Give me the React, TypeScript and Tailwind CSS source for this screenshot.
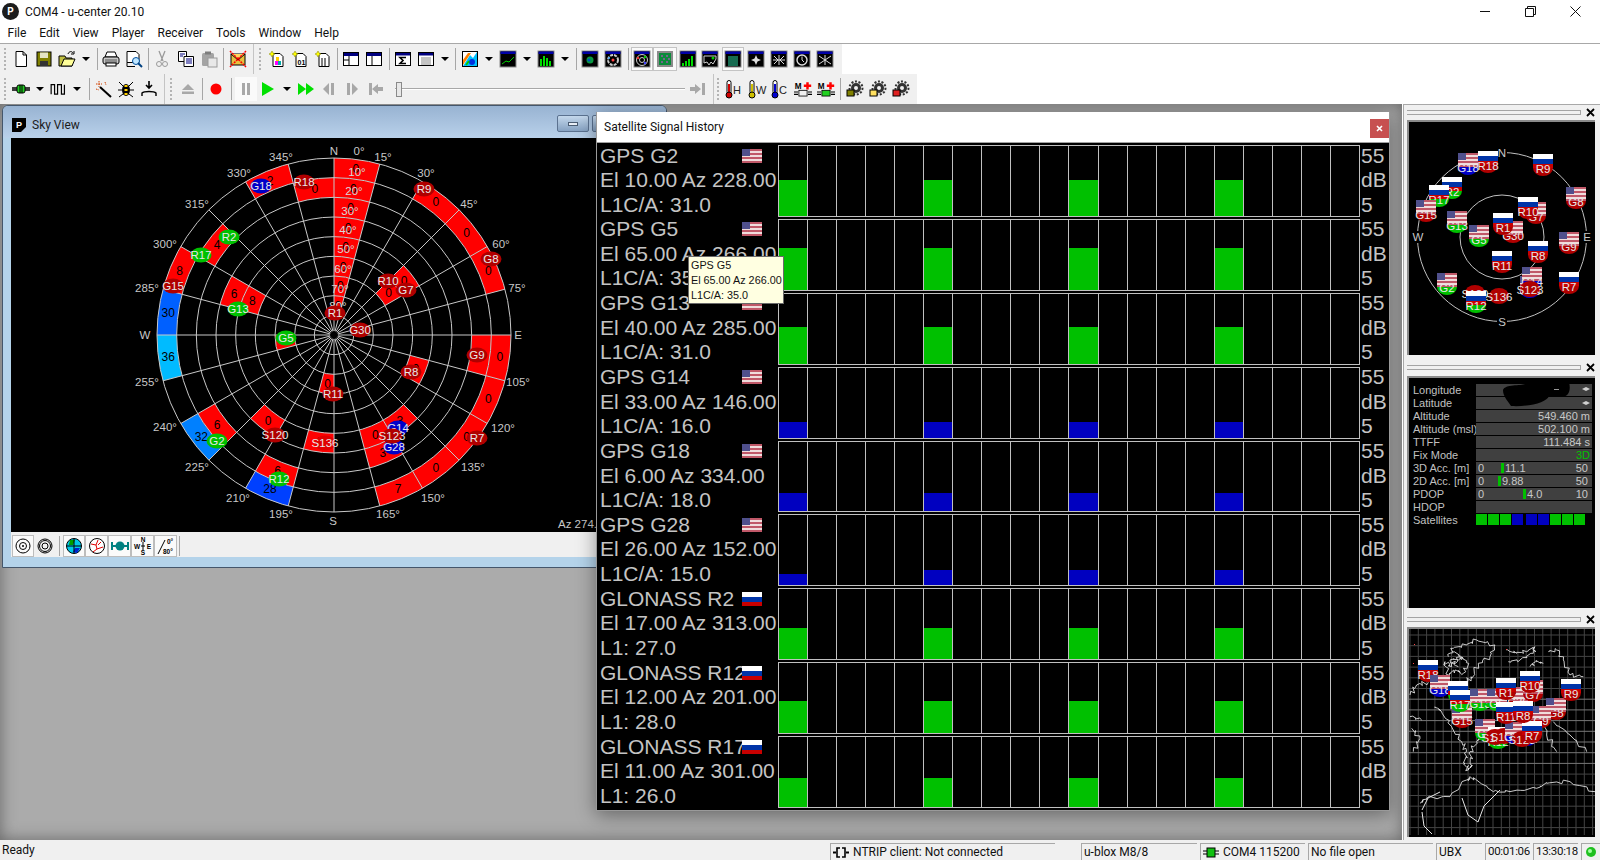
import type { ReactNode } from 'react';

const UI = 'font-["Roboto",sans-serif]';
const ARIAL = '"Liberation Sans", sans-serif';

// ---------- toolbar bits ----------
function I({ children }: { children: ReactNode }) {
  return <svg width="18" height="18" viewBox="0 0 18 18" className="block">{children}</svg>;
}

function Win({ children }: { children?: ReactNode }) {
  return (
    <I>
      <rect x="1" y="1" width="16" height="16" fill="#000" stroke="#8a8a8a" />
      <rect x="1.5" y="1.5" width="15" height="2.5" fill="#0000a8" />
      {children}
    </I>
  );
}

function Btn({ w, pressed, children }: { w: string; pressed?: boolean; children: ReactNode }) {
  return (
    <div className={`${w} h-[24px] flex items-center justify-center shrink-0 ${pressed ? 'bg-[#fafafa] border border-[#c4c4c4]' : ''}`}>
      {children}
    </div>
  );
}

function Dd({ w }: { w: string }) {
  return (
    <div className={`${w} h-[24px] flex items-center justify-center shrink-0`}>
      <svg width="8" height="4" viewBox="0 0 8 4"><path d="M0 0h8L4 4z" fill="#000" /></svg>
    </div>
  );
}

function Sep({ w }: { w: string }) {
  return (
    <div className={`${w} h-[24px] flex items-center justify-center shrink-0`}>
      <div className="w-px h-[22px] bg-[#a6a6a6]" />
    </div>
  );
}

function Grip({ w }: { w: string }) {
  return (
    <div className={`${w} h-[24px] flex flex-col items-center justify-center gap-[2px] shrink-0`}>
      {[0, 1, 2, 3, 4, 5].map(i => <div key={i} className="w-[2px] h-[2px] bg-[#b4b4b4]" />)}
    </div>
  );
}

const Star = () => <path d="M4 1l1 2 2 1-2 1-1 2-1-2-2-1 2-1z" fill="#ffff00" stroke="#808000" strokeWidth=".5" />;
const Page = () => <path d="M5 3.5h7l3 3v10H5z" fill="#fff" stroke="#000" />;

const Gear = ({ c }: { c: string }) => (
  <g>
    <circle cx="10" cy="8" r="5" fill="#333" />
    <circle cx="10" cy="8" r="6.5" fill="none" stroke="#333" strokeWidth="2" strokeDasharray="2 1.6" />
    <circle cx="10" cy="8" r="2" fill="#f0f0f0" />
    <rect x="1" y="10" width="7" height="6" fill={c} stroke="#000" />
  </g>
);

const Thermo = ({ c, t }: { c: string; t: string }) => (
  <svg width="22" height="20" viewBox="0 0 22 20" className="block">
    <rect x="5" y="1.5" width="4" height="13" rx="2" fill="#fff" stroke="#000" />
    <rect x="6" y="5" width="2" height="10" fill={c} />
    <circle cx="7" cy="16" r="3" fill={c} stroke="#000" />
    <text x="11" y="15" fontSize="11" fontFamily={ARIAL} fill="#222">{t}</text>
  </svg>
);

const MPlus = ({ c }: { c: string }) => (
  <svg width="18" height="17" viewBox="0 0 22 20" className="block">
    <text x="1" y="9" fontSize="10" fontWeight="700" fontFamily={ARIAL} fill="#000">M</text>
    <path d="M15 1h3v3h3v3h-3v3h-3V7h-3V4h3z" fill="#f00" />
    <path d="M0 13h5M0 16h5M17 13h5M17 16h5" stroke="#000" strokeWidth="1.4" />
    <rect x="6" y="11" width="10" height="7" fill={c} stroke="#000" />
  </svg>
);

function Toolbar1() {
  return (
    <div className="flex items-center h-[30px] w-[842px] bg-[#f0f0f0]">
      <Grip w="w-[10px]" />
      <Btn w="w-[22px]"><I><path d="M4 1.5h7l3.5 3.5v11.5H4z" fill="#fff" stroke="#000" /><path d="M11 1.5V5h3.5" fill="none" stroke="#000" /></I></Btn>
      <Btn w="w-[24px]"><I><rect x="2" y="2" width="14" height="14" fill="#808000" stroke="#000" /><rect x="5" y="2.5" width="8" height="5.5" fill="#e4e4c4" /><rect x="5" y="11" width="8" height="5" fill="#333" /></I></Btn>
      <Btn w="w-[22px]"><I><path d="M1 6h6l1 2h6v8H1z" fill="#c0c040" stroke="#000" /><path d="M3 16l3-7h11l-3 7z" fill="#ffff99" stroke="#000" /><path d="M10 4c1-3 4-3 5-1M16 1v3h-3" fill="none" stroke="#000" /></I></Btn>
      <Dd w="w-[16px]" />
      <Sep w="w-[6px]" />
      <Btn w="w-[22px]"><I><path d="M5 2h8l2 5H3z" fill="#fff" stroke="#000" /><rect x="1" y="7" width="16" height="7" rx="2" fill="#c8c8c8" stroke="#000" /><path d="M3 10h12M3 12h12" stroke="#555" /><rect x="4" y="13" width="10" height="3" fill="#fff" stroke="#000" /></I></Btn>
      <Btn w="w-[24px]"><I><path d="M2 1.5h9l3 3v8H2z" fill="#fff" stroke="#000" /><path d="M2 12.5v4h8" fill="none" stroke="#000" /><circle cx="11" cy="11" r="3.5" fill="#bfe6ff" stroke="#0050a0" /><path d="M13 13l4 4" stroke="#004080" strokeWidth="2" /></I></Btn>
      <Sep w="w-[4px]" />
      <Btn w="w-[24px]"><I><path d="M6 1l4 10M12 1L8 11" stroke="#9a9a9a" strokeWidth="1.3" /><circle cx="6" cy="14" r="2.5" fill="none" stroke="#9a9a9a" /><circle cx="12" cy="14" r="2.5" fill="none" stroke="#9a9a9a" /></I></Btn>
      <Btn w="w-[24px]"><I><path d="M1.5 1.5h8v10h-8z" fill="#fff" stroke="#000" /><path d="M7 6.5h9.5v10H7z" fill="#fff" stroke="#000" /><path d="M3 4h5M3 6h3M9 9h6M9 11h6M9 13h6" stroke="#000080" /></I></Btn>
      <Btn w="w-[22px]"><I><rect x="2" y="3" width="12" height="13" rx="1.5" fill="#a4a4a4" /><rect x="5" y="1.5" width="6" height="3" fill="#7d7d7d" /><rect x="8" y="8" width="9" height="9" fill="#e8e8e8" stroke="#9a9a9a" /></I></Btn>
      <Sep w="w-[7px]" />
      <Btn w="w-[22px]"><I><rect x="2" y="4" width="14" height="11" fill="#e8c040" stroke="#000" /><path d="M2 4l7 6 7-6" fill="#ffd860" stroke="#000" /><path d="M1 1l16 16M17 1L1 17" stroke="#f00" strokeWidth="1.5" strokeDasharray="2 1" /></I></Btn>
      <div className="w-[4px]" />
      <div className="w-px h-[30px] bg-[#c4c4c4]" />
      <Grip w="w-[12px]" />
      <Btn w="w-[22px]"><I><Page /><Star /><rect x="7" y="11" width="3" height="4" fill="#f0f" /><rect x="10" y="11" width="3" height="4" fill="#0aa" /><rect x="8" y="7" width="3" height="4" fill="#fc0" /></I></Btn>
      <Btn w="w-[24px]"><I><Page /><Star /><text x="6.5" y="15" fontSize="7" fontWeight="700" fontFamily={ARIAL} fill="#000">01</text></I></Btn>
      <Btn w="w-[22px]"><I><Page /><Star /><path d="M7 9h6M7 11h6M7 13h6M7 15h6" stroke="#000" strokeDasharray="2 1" /></I></Btn>
      <Sep w="w-[6px]" />
      <Btn w="w-[22px]"><I><rect x="1.5" y="2.5" width="15" height="13" fill="#fff" stroke="#000" /><rect x="2" y="3" width="14" height="3" fill="#000080" /><path d="M7 6v9M2 10h5" stroke="#000" /></I></Btn>
      <Btn w="w-[24px]"><I><rect x="1.5" y="2.5" width="15" height="13" fill="#fff" stroke="#000" /><rect x="2" y="3" width="14" height="3" fill="#000080" /><path d="M7 6v9" stroke="#000" /></I></Btn>
      <Sep w="w-[6px]" />
      <Btn w="w-[22px]"><I><rect x="1.5" y="2.5" width="15" height="13" fill="#fff" stroke="#000" /><rect x="2" y="3" width="14" height="2.5" fill="#000080" /><path d="M12 7.5H6l3 3-3 3h6" fill="none" stroke="#000" strokeWidth="1.6" /></I></Btn>
      <Btn w="w-[24px]"><I><rect x="1.5" y="2.5" width="15" height="13" fill="#fff" stroke="#000" /><rect x="2" y="3" width="14" height="2.5" fill="#000080" /><path d="M4 8h10M4 10h10M4 12h10M4 14h10" stroke="#888" /></I></Btn>
      <Dd w="w-[14px]" />
      <Sep w="w-[7px]" />
      <Btn w="w-[22px]"><I><rect x="1.5" y="1.5" width="15" height="15" fill="#fff" stroke="#000" /><path d="M2 16L9 5l3 3 4-6v14z" fill="#00c0ff" /><path d="M2 10l5-7h3L2 15z" fill="#ff8000" /><circle cx="11" cy="12" r="3" fill="#0030e0" /><path d="M5 15l3-4" stroke="#0c0" strokeWidth="2" /></I></Btn>
      <Dd w="w-[16px]" />
      <Btn w="w-[22px]"><Win><path d="M3 14l4-3 3 1 5-5" fill="none" stroke="#0c0" /></Win></Btn>
      <Dd w="w-[16px]" />
      <Btn w="w-[22px]"><Win><path d="M4 16V9M7 16V6M10 16V8M13 16v-5" stroke="#0d0" strokeWidth="2" /></Win></Btn>
      <Dd w="w-[16px]" />
      <Sep w="w-[6px]" />
      <Btn w="w-[22px]"><Win><circle cx="9" cy="10" r="3.5" fill="#0a9a40" /><circle cx="8" cy="10" r="1.5" fill="#0050c0" /></Win></Btn>
      <Btn w="w-[24px]"><Win><circle cx="9" cy="10" r="5" fill="none" stroke="#ccc" strokeWidth="2" strokeDasharray="3 1" /><circle cx="9" cy="10" r="1.5" fill="#f44" /><circle cx="5" cy="8" r="1" fill="#4af" /></Win></Btn>
      <Sep w="w-[6px]" />
      <Btn w="w-[22px]" pressed><Win><circle cx="9" cy="10" r="5.5" fill="none" stroke="#ccc" /><circle cx="9" cy="10" r="2.5" fill="none" stroke="#ccc" /><circle cx="5" cy="8" r="1.2" fill="#e33" /><circle cx="12" cy="7" r="1.2" fill="#0c0" /><circle cx="12" cy="13" r="1.2" fill="#44f" /></Win></Btn>
      <Btn w="w-[24px]" pressed><I><rect x="1" y="1" width="16" height="16" fill="#8a8a8a" /><rect x="3" y="3" width="12" height="12" fill="#0a8a3a" /><path d="M5 6h2M10 6h2M7 9h2M12 9h2M5 12h2M10 12h2" stroke="#e040e0" /></I></Btn>
      <Btn w="w-[21px]"><Win><path d="M4 16v-3M7 16v-5M10 16V9M13 16V6" stroke="#0d0" strokeWidth="2" /></Win></Btn>
      <Btn w="w-[24px]"><Win><path d="M3 6h12v3l-3 5-2-2-2 3-2-3-3 1z" fill="none" stroke="#ccc" /><circle cx="12" cy="8" r="1.5" fill="#0c0" /></Win></Btn>
      <Btn w="w-[22px]" pressed><Win><path d="M4 7h10M4 9h10M4 11h10M4 13h10M4 15h10" stroke="#2dd4a0" /></Win></Btn>
      <Btn w="w-[24px]"><Win><path d="M9 5l1.5 3.5L14 10l-3.5 1.5L9 15l-1.5-3.5L4 10l3.5-1.5z" fill="#ddd" /></Win></Btn>
      <Btn w="w-[22px]"><Win><path d="M4 6l4 4-4 4M14 6l-4 4 4 4M9 5v10M3 10h12" stroke="#ddd" fill="none" /></Win></Btn>
      <Btn w="w-[24px]"><Win><circle cx="9" cy="10" r="5" fill="none" stroke="#ddd" strokeWidth="1.4" /><path d="M9 6.5V10l2 2" stroke="#ddd" fill="none" /></Win></Btn>
      <Btn w="w-[22px]"><Win><path d="M3 14L15 6M3 6l12 8M9 5v10" stroke="#ddd" /></Win></Btn>
    </div>
  );
}

function Toolbar2() {
  return (
    <div className="flex items-center h-[30px] w-[917px] bg-[#f0f0f0]">
      <Grip w="w-[10px]" />
      <Btn w="w-[22px]"><I><path d="M0 8h18M0 10h18" stroke="#000" strokeWidth="1.3" /><rect x="5" y="5" width="8" height="8" rx="2" fill="#20d020" stroke="#000" /><path d="M8 5v8M10 5v8" stroke="#000" /></I></Btn>
      <Dd w="w-[16px]" />
      <Btn w="w-[20px]"><svg width="16" height="12" viewBox="0 0 18 14" className="block"><path d="M1 13V2h4v11h3.5V2H13v11h3.5V2" fill="none" stroke="#000" strokeWidth="1.4" /></svg></Btn>
      <Dd w="w-[18px]" />
      <Sep w="w-[6px]" />
      <Btn w="w-[22px]"><I><path d="M6 7l11 10" stroke="#000" strokeWidth="2" /><path d="M5 1v6M2 4h6M11 2l1 3M2 9l3 1" stroke="#d04000" strokeDasharray="1.5 1" /></I></Btn>
      <Btn w="w-[24px]"><I><ellipse cx="9" cy="10" rx="4" ry="6" fill="#000" /><path d="M9 5v11" stroke="#ffd000" strokeWidth="3" strokeDasharray="2 2" /><path d="M2 2l4 4M16 2l-4 4M1 10h4M13 10h4M2 17l4-3M16 17l-4-3" stroke="#000" /></I></Btn>
      <Btn w="w-[22px]"><I><path d="M9 1v7M6 5l3 3 3-3" fill="none" stroke="#000" strokeWidth="1.6" /><path d="M2 16v-3c2-2 12-2 14 0v3" fill="none" stroke="#000" strokeWidth="1.4" /></I></Btn>
      <div className="w-[4px]" />
      <div className="w-px h-[30px] bg-[#c4c4c4]" />
      <Grip w="w-[12px]" />
      <Btn w="w-[22px]"><I><path d="M9 4l6 6H3z" fill="#a8a8a8" /><rect x="3" y="11.5" width="12" height="2.5" fill="#a8a8a8" /></I></Btn>
      <Sep w="w-[6px]" />
      <Btn w="w-[22px]"><I><circle cx="9" cy="9" r="5.5" fill="#f00" /></I></Btn>
      <Sep w="w-[8px]" />
      <div className="w-[22px] h-[24px] flex items-center justify-center shrink-0 bg-[#fafafa]"><I><rect x="5" y="3" width="3" height="12" fill="#a8a8a8" /><rect x="10" y="3" width="3" height="12" fill="#a8a8a8" /></I></div>
      <Btn w="w-[22px]"><I><path d="M3 2l12 7-12 7z" fill="#00e000" /></I></Btn>
      <Dd w="w-[16px]" />
      <Btn w="w-[22px]"><I><path d="M1 3l8 6-8 6zM9 3l8 6-8 6z" fill="#00e000" /></I></Btn>
      <Btn w="w-[24px]"><I><path d="M9 3L3 9l6 6z" fill="#a8a8a8" /><rect x="11" y="3" width="3" height="12" fill="#a8a8a8" /></I></Btn>
      <Btn w="w-[22px]"><I><path d="M9 3l6 6-6 6z" fill="#a8a8a8" /><rect x="4" y="3" width="3" height="12" fill="#a8a8a8" /></I></Btn>
      <Btn w="w-[24px]"><I><rect x="3" y="3" width="3" height="12" fill="#a8a8a8" /><path d="M6 9l6-5v3h5v4h-5v3z" fill="#a8a8a8" /></I></Btn>
      <div className="w-[300px] h-[24px] relative flex items-center shrink-0">
        <div className="w-[290px] ml-[8px] h-[2px] bg-[#a8a8a8] border-b border-white" />
        <div className="absolute left-[9px] top-[5px] w-[6px] h-[15px] bg-[#e8e8e8] border border-[#8a8a8a]" />
      </div>
      <Btn w="w-[22px]"><I><path d="M1 7h5V4l6 5-6 5v-3H1z" fill="#a8a8a8" /><rect x="13" y="3" width="3" height="12" fill="#a8a8a8" /></I></Btn>
      <div className="w-[4px]" />
      <div className="w-px h-[30px] bg-[#c4c4c4]" />
      <Grip w="w-[8px]" />
      <Btn w="w-[22px]"><Thermo c="#d00000" t="H" /></Btn>
      <Btn w="w-[23px]"><Thermo c="#d0c000" t="W" /></Btn>
      <Btn w="w-[23px]"><Thermo c="#0000d0" t="C" /></Btn>
      <Btn w="w-[25px]"><MPlus c="#f0f0f0" /></Btn>
      <Btn w="w-[21px]"><MPlus c="#20d020" /></Btn>
      <Sep w="w-[8px]" />
      <Btn w="w-[22px]"><I><Gear c="#808000" /></I></Btn>
      <Btn w="w-[23px]"><I><Gear c="#ffe060" /></I></Btn>
      <Btn w="w-[23px]"><I><Gear c="#e02020" /></I></Btn>
    </div>
  );
}

// ---------- flags ----------
function UsFlag({ x = 0, y = 0 }: { x?: number; y?: number }) {
  return (
    <g transform={`translate(${x} ${y})`}>
      <rect width="20" height="14" fill="#f0dcdc" />
      <path d="M0 1h20M0 5h20M0 9h20M0 13h20" stroke="#c05868" strokeWidth="2" />
      <rect width="8" height="7" fill="#50508c" />
    </g>
  );
}

function RuFlag({ x = 0, y = 0 }: { x?: number; y?: number }) {
  return (
    <g transform={`translate(${x} ${y})`}>
      <rect width="20" height="5" fill="#fff" />
      <rect y="5" width="20" height="5" fill="#0034a8" />
      <rect y="10" width="20" height="4" fill="#c80000" />
    </g>
  );
}

const SAT_GREEN = ['R2', 'R17', 'G13', 'G5', 'G2', 'R12'];
const SAT_BLUE = ['G18', 'G14', 'G28'];
const satFill = (n: string) => (SAT_GREEN.includes(n) ? '#00c000' : SAT_BLUE.includes(n) ? '#0000c8' : '#b00000');

// ---------- sky plot ----------
const CX = 334;
const CY = 335;
const R = 177;
const pt = (az: number, r: number) => {
  const a = (az * Math.PI) / 180;
  return `${(CX + r * Math.sin(a)).toFixed(1)} ${(CY - r * Math.cos(a)).toFixed(1)}`;
};
const xy = (az: number, r: number) => {
  const a = (az * Math.PI) / 180;
  return [CX + r * Math.sin(a), CY - r * Math.cos(a)];
};
const rb = (band: number) => (R * (9 - band)) / 9;

const CELLS: [number, number, string, string?][] = [
  [0, 0, '0'], [0, 1, '0'], [0, 2, '0'], [0, 3, '0'], [0, 4, '0'], [0, 5, '0'], [0, 6, '0'], [0, 7, '0'],
  [330, 0, '2'], [345, 1, '0'], [30, 0, '0'], [45, 0, '0'], [60, 0, '0'], [90, 0, '0'], [90, 1, ''], [105, 0, '0'],
  [120, 0, '0'], [135, 0, '0'], [150, 0, '7'], [300, 1, '4'], [285, 0, '8'], [270, 0, '30', '#0060ff'], [255, 0, '36', '#00bbff'],
  [285, 3, '6'], [285, 4, '8'], [255, 6, ''], [45, 4, '0'], [45, 5, '0'], [105, 4, '0'], [180, 6, '0'], [210, 3, '0'],
  [225, 1, '6'], [225, 0, '32', '#0080ff'], [195, 1, '6'], [195, 0, '28', '#0040ff'], [180, 3, '0'], [135, 3, '3'], [150, 3, '0'], [150, 2, '3'],
];

const OUTER: [number, number, string][] = [
  [334, 151, 'N'], [359, 151, '0°'], [383, 157, '15°'], [426, 173, '30°'], [469, 204, '45°'], [501, 244, '60°'], [517, 288, '75°'],
  [518, 335, 'E'], [518, 382, '105°'], [503, 428, '120°'], [473, 467, '135°'], [433, 498, '150°'], [388, 514, '165°'], [333, 521, 'S'],
  [281, 514, '195°'], [238, 498, '210°'], [197, 467, '225°'], [165, 427, '240°'], [147, 382, '255°'], [145, 335, 'W'], [147, 288, '285°'],
  [165, 244, '300°'], [197, 204, '315°'], [239, 173, '330°'], [281, 157, '345°'],
];

const RINGS: [number, number, string][] = [
  [357, 172, '10°'], [354, 191, '20°'], [350, 211, '30°'], [348, 230, '40°'], [346, 249, '50°'], [343, 269, '60°'], [340, 289, '70°'], [338, 306, '80°'],
];

const MARKERS: [number, number, string][] = [
  [261, 186, 'G18'], [304, 182, 'R18'], [424, 189, 'R9'], [229, 237, 'R2'], [201, 255, 'R17'], [173, 286, 'G15'], [238, 309, 'G13'],
  [388, 281, 'R10'], [406, 290, 'G7'], [491, 259, 'G8'], [360, 330, 'G30'], [335, 313, 'R1'], [286, 338, 'G5'], [477, 355, 'G9'],
  [411, 372, 'R8'], [333, 394, 'R11'], [477, 438, 'R7'], [398, 428, 'G14'], [394, 447, 'G28'], [392, 436, 'S123'], [275, 435, 'S120'],
  [325, 443, 'S136'], [217, 441, 'G2'], [279, 479, 'R12'],
];

function SkyPlot() {
  return (
    <svg viewBox="11 138 656 394" width="656" height="394" className="block bg-black" fontFamily={ARIAL}>
      {CELLS.map(([az, b, , c], i) => {
        const r0 = rb(b);
        const r1 = rb(b + 1);
        return (
          <path
            key={i}
            d={`M${pt(az, r0)}A${r0} ${r0} 0 0 1 ${pt(az + 15, r0)}L${pt(az + 15, r1)}A${r1} ${r1} 0 0 0 ${pt(az, r1)}Z`}
            fill={c || '#ff0000'}
          />
        );
      })}
      {[1, 2, 3, 4, 5, 6, 7, 8, 9].map(i => (
        <circle key={i} cx={CX} cy={CY} r={(i * R) / 9} fill="none" stroke="#c8c8c8" />
      ))}
      {Array.from({ length: 24 }, (_, i) => (
        <line key={i} x1={xy(i * 15, 4)[0]} y1={xy(i * 15, 4)[1]} x2={xy(i * 15, R)[0]} y2={xy(i * 15, R)[1]} stroke="#c8c8c8" />
      ))}
      {CELLS.map(([az, b, v], i) => {
        const [x, y] = xy(az + 7.5, (rb(b) + rb(b + 1)) / 2);
        return <text key={i} x={x} y={y} fontSize="12" fill="#000" textAnchor="middle" dominantBaseline="central">{v}</text>;
      })}
      {OUTER.map(([x, y, t]) => (
        <text key={t} x={x} y={y} fontSize="11.5" fill="#c8c8c8" textAnchor="middle" dominantBaseline="central">{t}</text>
      ))}
      {RINGS.map(([x, y, t]) => (
        <text key={t} x={x} y={y} fontSize="11.5" fill="#d8d8d8" textAnchor="middle" dominantBaseline="central">{t}</text>
      ))}
      {MARKERS.map(([x, y, n]) => (
        <g key={n}>
          <ellipse cx={x} cy={y} rx="10.5" ry="7.5" fill={n === 'S136' ? '#e00000' : satFill(n)} />
          <text x={x} y={y} fontSize="11.5" fill="#e8e8e8" textAnchor="middle" dominantBaseline="central">{n}</text>
        </g>
      ))}
      <text x="558" y="524" fontSize="11.5" fill="#c8c8c8" dominantBaseline="central">Az 274.00 El 45.00</text>
    </svg>
  );
}

function SkyBtn({ w, pressed, children }: { w: string; pressed?: boolean; children: ReactNode }) {
  return (
    <div className={`${w} h-[22px] flex items-center justify-center shrink-0 ${pressed ? 'bg-[#fafafa] border border-[#bdbdbd]' : ''}`}>
      {children}
    </div>
  );
}

function SkyView() {
  return (
    <div className="absolute left-[2px] top-[1px] w-[665px] h-[463px] rounded-t-[6px] border border-[#44566b] bg-[#b4d3ea] flex flex-col">
      <div className="h-[32px] pl-[8px] pt-[5px] flex items-center rounded-t-[5px] bg-gradient-to-b from-[#98b3d2] to-[#b9d1ea] shrink-0 relative">
        <svg width="16" height="16" viewBox="0 0 16 16">
          <path d="M1 1h14v9l-5 5H1z" fill="#000" />
          <text x="5" y="11" fontSize="9" fontWeight="700" fontFamily={ARIAL} fill="#fff">P</text>
        </svg>
        <span className={`${UI} ml-[5px] text-[12px] text-[#1c1c1c]`}>Sky View</span>
        <div className="absolute left-[554px] top-[9px] w-[32px] h-[17px] rounded-[2px] border border-[#5b7290] bg-gradient-to-b from-[#c4d8ec] to-[#86a2c2] flex items-center justify-center">
          <div className="w-[10px] h-[4px] bg-[#e8eef6] border border-[#4a5c72]" />
        </div>
        <div className="absolute left-[589px] top-[9px] w-[32px] h-[17px] rounded-[2px] border border-[#5b7290] bg-gradient-to-b from-[#c4d8ec] to-[#86a2c2]" />
      </div>
      <div className="ml-[8px] mr-[8px]">
        <SkyPlot />
        <div className="h-[25px] bg-[#f0f0f0] flex items-end pl-[1px]">
          <SkyBtn w="w-[22px]" pressed><svg width="18" height="18" viewBox="0 0 18 18"><circle cx="9" cy="9" r="7" fill="none" stroke="#000" /><circle cx="9" cy="9" r="3.5" fill="none" stroke="#000" /><circle cx="9" cy="9" r="1" fill="#000" /></svg></SkyBtn>
          <SkyBtn w="w-[22px]"><svg width="18" height="18" viewBox="0 0 18 18"><circle cx="9" cy="9" r="7" fill="none" stroke="#000" /><circle cx="9" cy="9" r="5.5" fill="none" stroke="#000" /><circle cx="9" cy="9" r="3" fill="none" stroke="#000" /></svg></SkyBtn>
          <div className="w-[7px] h-[20px] mb-[1px] flex justify-center"><div className="w-px bg-[#a6a6a6]" /></div>
          <SkyBtn w="w-[22px]" pressed><svg width="18" height="18" viewBox="0 0 18 18"><circle cx="9" cy="9" r="7.5" fill="#00c8e8" stroke="#000" /><path d="M5 3l5 0-2 5-4 0z" fill="#00a000" /><path d="M10 11l5 0-3 5-4-1z" fill="#0020d0" /><path d="M1.5 9h15M9 1.5v15" stroke="#000" /></svg></SkyBtn>
          <SkyBtn w="w-[23px]" pressed><svg width="18" height="18" viewBox="0 0 18 18"><circle cx="9" cy="9" r="7.5" fill="#fff" stroke="#000" /><path d="M3 7l5 1 2-5M8 8l1 4-4 3M9 12l6-2M13 5l-3 3" fill="none" stroke="#e00000" /></svg></SkyBtn>
          <SkyBtn w="w-[23px]" pressed><svg width="18" height="18" viewBox="0 0 18 18"><circle cx="9" cy="9" r="4.5" fill="#008080" /><path d="M1 9h16M1 5v8M17 5v8" stroke="#008080" strokeWidth="2" /></svg></SkyBtn>
          <SkyBtn w="w-[23px]" pressed>
            <svg width="20" height="20" viewBox="0 0 20 20" fontFamily={ARIAL} fontWeight="700" fontSize="6.5" textAnchor="middle">
              <text x="10" y="6">N</text><text x="4" y="12.5">W</text><text x="16" y="12.5">E</text><text x="10" y="19">S</text>
              <path d="M10 6v8M8 10h4" stroke="#000" />
            </svg>
          </SkyBtn>
          <SkyBtn w="w-[23px]" pressed>
            <svg width="20" height="20" viewBox="0 0 20 20" fontFamily={ARIAL} fontWeight="700" fontSize="6.5">
              <path d="M2 18L9 4" stroke="#000" /><text x="11" y="8">0°</text><text x="7" y="18">80°</text>
            </svg>
          </SkyBtn>
          <div className="w-[5px] h-[20px] mb-[1px] flex justify-center"><div className="w-px bg-[#a6a6a6]" /></div>
        </div>
      </div>
    </div>
  );
}

// ---------- signal history ----------
type Sig = { name: string; pos: string; sig: string; ru?: boolean; v: number; first?: number };
const SIGNALS: Sig[] = [
  { name: 'GPS G2', pos: 'El 10.00 Az 228.00', sig: 'L1C/A: 31.0', v: 31 },
  { name: 'GPS G5', pos: 'El 65.00 Az 266.00', sig: 'L1C/A: 35.0', v: 35 },
  { name: 'GPS G13', pos: 'El 40.00 Az 285.00', sig: 'L1C/A: 31.0', v: 31 },
  { name: 'GPS G14', pos: 'El 33.00 Az 146.00', sig: 'L1C/A: 16.0', v: 16 },
  { name: 'GPS G18', pos: 'El 6.00 Az 334.00', sig: 'L1C/A: 18.0', v: 18 },
  { name: 'GPS G28', pos: 'El 26.00 Az 152.00', sig: 'L1C/A: 15.0', v: 16, first: 13 },
  { name: 'GLONASS R2', pos: 'El 17.00 Az 313.00', sig: 'L1: 27.0', ru: true, v: 27 },
  { name: 'GLONASS R12', pos: 'El 12.00 Az 201.00', sig: 'L1: 28.0', ru: true, v: 28 },
  { name: 'GLONASS R17', pos: 'El 11.00 Az 301.00', sig: 'L1: 26.0', ru: true, v: 26 },
];

function SignalRow({ s }: { s: Sig }) {
  const color = s.v < 20 ? 'bg-[#0000c0]' : 'bg-[#00c000]';
  return (
    <div className="flex-1 min-h-0 flex text-[21px] leading-[24.5px] text-[#c4c4c4]" style={{ fontFamily: ARIAL }}>
      <div className="w-[181px] shrink-0 relative pl-[3px] whitespace-nowrap -mt-[1.5px]">
        <div>{s.name}</div>
        <div>{s.pos}</div>
        <div>{s.sig}</div>
        <svg width="20" height="14" viewBox="0 0 20 14" className="absolute left-[145px] top-[5px]">
          {s.ru ? <RuFlag /> : <UsFlag />}
        </svg>
      </div>
      <div className="w-[582px] shrink-0 mb-[2px] flex border-y border-r border-[#c0c0c0]">
        {Array.from({ length: 20 }, (_, i) => {
          const val = i === 0 && s.first ? s.first : s.v;
          return (
            <div key={i} className="flex-1 border-l border-[#c0c0c0] flex flex-col justify-end">
              {i % 5 === 0 && <div className={color} style={{ height: `${((val - 5) / 50) * 100}%` }} />}
            </div>
          );
        })}
      </div>
      <div className="w-[29px] shrink-0 pl-[1px] -mt-[1.5px]">
        <div>55</div>
        <div>dB</div>
        <div>5</div>
      </div>
    </div>
  );
}

function SignalWindow() {
  return (
    <div className="absolute left-[596px] top-[8px] w-[794px] h-[699px] bg-white border border-[#9a9a9a] border-t-0 shadow-[0_4px_18px_rgba(0,0,0,0.4)] flex flex-col">
      <div className="h-[31px] shrink-0 bg-white flex items-center relative border-b border-[#a0a0a0]">
        <span className={`${UI} ml-[7px] text-[12px] text-[#111]`}>Satellite Signal History</span>
        <div className="absolute right-[0px] top-[7px] w-[19px] h-[19px] bg-[#c75050] flex items-center justify-center">
          <svg width="7" height="7" viewBox="0 0 7 7"><path d="M1 1l5 5M6 1L1 6" stroke="#fff" strokeWidth="1.6" /></svg>
        </div>
      </div>
      <div className="flex-1 min-h-0 bg-black pt-[2px] flex flex-col overflow-hidden">
        {SIGNALS.map(s => <SignalRow key={s.name} s={s} />)}
      </div>
      <div className="absolute left-[91px] top-[144px] w-[96px] h-[48px] bg-[#ffffe1] border border-[#6a6a6a] pl-[2px] pt-[1px] text-[10.8px] leading-[15px] text-[#111] whitespace-nowrap" style={{ fontFamily: ARIAL }}>
        <div>GPS G5</div>
        <div>El 65.00 Az 266.00</div>
        <div>L1C/A: 35.0</div>
      </div>
    </div>
  );
}

// ---------- dock panels ----------
function DockPanel({ h, top, children }: { h: string; top: string; children: ReactNode }) {
  return (
    <div className={`${h} shrink-0 flex flex-col pl-[3px] pr-[5px] pb-[4px]`}>
      <div className={`${top} shrink-0 flex items-center pr-[1px]`}>
        <div className="flex-1 mr-[5px] h-[5px] border-y border-[#a4a4a4] border-r" />
        <svg width="9" height="9" viewBox="0 0 9 9" className="mr-[-1px]"><path d="M1 1l7 7M8 1L1 8" stroke="#000" strokeWidth="1.8" /></svg>
      </div>
      <div className="flex-1 min-h-0 bg-black border-t-2 border-l-2 border-[#8a8a8a] overflow-hidden">{children}</div>
    </div>
  );
}

type Mini = [number, number, string];

function MiniSat({ cx, top, n }: { cx: number; top: number; n: string }) {
  const x = cx - 10;
  return (
    <g>
      <ellipse cx={cx} cy={top + 14} rx="10" ry="8" fill={satFill(n)} />
      {n[0] === 'G' && <UsFlag x={x} y={top} />}
      {n[0] === 'R' && <RuFlag x={x} y={top} />}
      <text x={cx} y={top + 15} fontSize="11.5" fill="#e8e8e8" textAnchor="middle" dominantBaseline="central" fontFamily={ARIAL}>{n}</text>
    </g>
  );
}

const SKY2: Mini[] = [
  [1468, 153, 'G18'], [1488, 151, 'R18'], [1543, 154, 'R9'], [1576, 187, 'G8'], [1452, 177, 'R2'], [1439, 185, 'R17'], [1426, 200, 'G15'],
  [1457, 211, 'G13'], [1479, 225, 'G5'], [1513, 221, 'G30'], [1503, 213, 'R1'], [1536, 202, 'G7'], [1528, 197, 'R10'], [1538, 241, 'R8'],
  [1502, 251, 'R11'], [1569, 232, 'G9'], [1447, 273, 'G2'], [1475, 279, 'S120'], [1499, 282, 'S136'], [1476, 291, 'R12'], [1530, 276, 'G28'], [1532, 267, 'G14'], [1530, 275, 'S123'], [1569, 272, 'R7'],
];

function SkyMini() {
  return (
    <svg viewBox="1409 122 186 232" width="186" height="232" className="block" fontFamily={ARIAL}>
      <circle cx="1502" cy="237" r="84.5" fill="none" stroke="#c0c0c0" />
      <circle cx="1502" cy="237" r="42" fill="none" stroke="#c0c0c0" />
      {[[1502, 153, 'N'], [1587, 237, 'E'], [1502, 322, 'S'], [1418, 237, 'W']].map(([x, y, t]) => (
        <g key={t as string}>
          <rect x={(x as number) - 5} y={(y as number) - 6} width="10" height="12" fill="#000" />
          <text x={x} y={y} fontSize="11.5" fill="#c8c8c8" textAnchor="middle" dominantBaseline="central">{t}</text>
        </g>
      ))}
      {SKY2.map(([cx, top, n]) => <MiniSat key={n} cx={cx} top={top} n={n} />)}
    </svg>
  );
}

const MAP2: Mini[] = [
  [1428, 660, 'R18'], [1440, 675, 'G18'], [1458, 681, 'R2'], [1462, 706, 'G15'], [1460, 690, 'R17'], [1480, 689, 'G13'], [1497, 689, 'G5'],
  [1518, 687, 'G30'], [1506, 678, 'R1'], [1533, 680, 'G7'], [1530, 671, 'R10'], [1556, 698, 'G8'], [1571, 679, 'R9'], [1541, 706, 'G9'],
  [1485, 719, 'G2'], [1498, 727, 'R12'], [1495, 723, 'S120'], [1504, 722, 'S136'], [1527, 724, 'G14'], [1515, 722, 'G28'], [1522, 725, 'S123'], [1532, 721, 'R7'], [1506, 702, 'R11'], [1523, 701, 'R8'],
];

// roughens a coarse outline so it reads like a coastline
function coast(points: number[][]) {
  let d = '';
  points.forEach(([x, y], i) => {
    if (i === 0) {
      d += `M${x} ${y}`;
      return;
    }
    const [px, py] = points[i - 1];
    for (let k = 1; k <= 5; k++) {
      const t = k / 5;
      const seed = x * 0.37 + y * 0.73 + k * 2.1;
      const off = k === 5 ? 0 : Math.sin(seed) * 6;
      d += `L${(px + (x - px) * t + off).toFixed(1)} ${(py + (y - py) * t - Math.cos(seed * 1.7) * (k === 5 ? 0 : 6)).toFixed(1)}`;
    }
  });
  return d;
}

const COASTS: number[][][] = [
  [[235, 185], [250, 160], [290, 150], [320, 135], [375, 150], [360, 185], [325, 205], [305, 250], [290, 255]],
  [[225, 200], [245, 215], [270, 185], [295, 205], [280, 235], [255, 225], [235, 240], [225, 200]],
  [[250, 170], [280, 190], [240, 195], [265, 215]],
  [[120, 300], [140, 270], [175, 262]],
  [[195, 335], [215, 350], [245, 395], [275, 440], [290, 470], [285, 505], [295, 525], [305, 510], [300, 470], [320, 440], [345, 420]],
  [[120, 365], [155, 375]],
  [[125, 400], [150, 430], [130, 470]],
  [[410, 165], [440, 175], [470, 170], [495, 155], [490, 175], [450, 195], [415, 200]],
  [[535, 170], [560, 165], [580, 195], [600, 240], [640, 245]],
  [[480, 215], [500, 200], [520, 205]],
  [[510, 350], [530, 420], [560, 470]],
  [[550, 380], [600, 420], [650, 470]],
  [[150, 625], [170, 610], [240, 605], [290, 555], [310, 548], [370, 590], [420, 590], [500, 580], [530, 565], [600, 560], [675, 590]],
];

function MapMini() {
  return (
    <svg viewBox="1409 629 186 207" width="186" height="207" className="block" fontFamily={ARIAL}>
      {Array.from({ length: 23 }, (_, i) => (
        <line key={i} x1={1410 + i * 8.3} x2={1410 + i * 8.3} y1="628" y2="835" stroke="#444" />
      ))}
      {Array.from({ length: 20 }, (_, i) => (
        <line key={i} y1={635 + i * 10.7} y2={635 + i * 10.7} x1="1408" x2="1595" stroke={i > 5 && i < 13 ? '#777' : '#444'} />
      ))}
      <g transform="translate(1370 595) scale(.3333)" fill="none" stroke="#e8e8e8" strokeWidth="2.6">
        {COASTS.map((c, i) => <path key={i} d={coast(c)} />)}
      </g>
      <path d="M1422 812L1424 826L1432 834M1440 792L1428 798L1422 810M1462 798L1468 815L1478 822L1484 806L1500 790" fill="none" stroke="#e8e8e8" />
      <rect x="1414" y="644" width="1" height="1" fill="#f44" />
      <rect x="1506" y="649" width="1" height="1" fill="#f44" />
      <rect x="1413" y="663" width="1" height="1" fill="#f44" />
      {MAP2.map(([cx, top, n]) => <MiniSat key={n} cx={cx} top={top} n={n} />)}
    </svg>
  );
}

function Bar({ mark, val, end }: { mark: string; val: string; end: string }) {
  return (
    <div className="relative h-full px-[2px] flex justify-between">
      <span>0</span>
      <span>{end}</span>
      <span className={`absolute ${mark} top-0 flex items-center h-full`}>
        <span className="w-[3px] h-[10px] bg-[#00c000] mr-[1px]" />
        {val}
      </span>
    </div>
  );
}

function InfoRow({ label, children }: { label: string; children?: ReactNode }) {
  return (
    <div className="h-[13px] flex">
      <div className="w-[63px] shrink-0 whitespace-nowrap">{label}</div>
      <div className="flex-1 bg-[#404040] mb-[1px] text-right text-[#c8c8c8] leading-[12px] pr-[2px]">{children}</div>
    </div>
  );
}

function InfoPanel() {
  return (
    <div className="relative h-full pl-[4px] pr-[3px] pt-[6px] text-[11px] leading-[13px] text-[#c0c0c0]" style={{ fontFamily: ARIAL }}>
      <InfoRow label="Longitude" />
      <InfoRow label="Latitude" />
      <InfoRow label="Altitude">549.460 m</InfoRow>
      <InfoRow label="Altitude (msl)">502.100 m</InfoRow>
      <InfoRow label="TTFF">111.484 s</InfoRow>
      <InfoRow label="Fix Mode"><span className="text-[#00c000]">3D</span></InfoRow>
      <InfoRow label="3D Acc. [m]"><Bar mark="left-[25px]" val="11.1" end="50" /></InfoRow>
      <InfoRow label="2D Acc. [m]"><Bar mark="left-[22px]" val="9.88" end="50" /></InfoRow>
      <InfoRow label="PDOP"><Bar mark="left-[47px]" val="4.0" end="10" /></InfoRow>
      <InfoRow label="HDOP" />
      <div className="h-[13px] flex">
        <div className="w-[63px] shrink-0">Satellites</div>
        <div className="flex gap-[1px] h-[11px]">
          <div className="w-[11px] bg-[#00c000]" />
          <div className="w-[11px] bg-[#00c000]" />
          <div className="w-[11px] bg-[#00c000]" />
          <div className="w-[11px] bg-[#0000c0] mr-[2px]" />
          <div className="w-[11px] bg-[#0000c0]" />
          <div className="w-[11px] bg-[#0000c0]" />
          <div className="w-[11px] bg-[#00c000]" />
          <div className="w-[11px] bg-[#00c000]" />
          <div className="w-[11px] bg-[#00c000]" />
        </div>
      </div>
      {/* redacted position, scribbled over in the original */}
      <svg width="90" height="34" viewBox="0 0 90 34" className="absolute left-[92px] top-[-2px]">
        <path d="M2 14C4 8 20 10 24 8C30 0 66 -2 68 6C70 14 68 20 62 21L48 20C46 26 30 31 10 30C6 24 2 20 2 14Z" fill="#000" />
        <path d="M53 13h5v1h-5z" fill="#9a9a9a" />
        <path d="M81 13l4-2 4 2-4 2zM81 27l4-2 4 2-4 2z" fill="#d0d0d0" />
      </svg>
    </div>
  );
}

// ---------- status bar ----------
function Cell({ w, children }: { w: string; children?: ReactNode }) {
  return (
    <div className={`${w} h-[17px] shrink-0 border-t border-l border-[#a8a8a8] flex items-center pl-[2px] whitespace-nowrap overflow-hidden`}>
      {children}
    </div>
  );
}

export default function App() {
  return (
    <div className={`w-[1600px] h-[860px] overflow-hidden flex flex-col bg-white ${UI} text-[12px] text-[#111]`}>
      {/* title bar */}
      <div className="h-[22px] flex items-center pl-[2px] pt-[1px] shrink-0">
        <div className="w-[17px] h-[17px] rounded-full bg-[#1c1c1c] text-white text-[10px] font-bold flex items-center justify-center">P</div>
        <span className="ml-[6px]">COM4 - u-center 20.10</span>
        <div className="ml-auto mr-[2px] flex items-center">
          <div className="w-[46px] flex justify-center"><svg width="11" height="11" viewBox="0 0 11 11"><path d="M0 5.5h10" stroke="#111" /></svg></div>
          <div className="w-[44px] flex justify-center"><svg width="11" height="11" viewBox="0 0 11 11"><path d="M2.5 2.5V.5h8v8h-2M.5 2.5h8v8h-8z" fill="none" stroke="#111" /></svg></div>
          <div className="w-[46px] flex justify-center"><svg width="11" height="11" viewBox="0 0 11 11"><path d="M.5.5l10 10M10.5.5l-10 10" stroke="#111" /></svg></div>
        </div>
      </div>
      {/* menu */}
      <div className="h-[20px] flex items-center pl-[1px] pt-[1px] border-b border-[#a8a8a8] box-content shrink-0">
        {['File', 'Edit', 'View', 'Player', 'Receiver', 'Tools', 'Window', 'Help'].map(m => (
          <span key={m} className="px-[6.5px]">{m}</span>
        ))}
      </div>
      {/* toolbars */}
      <div className="shrink-0 h-[60px] flex flex-col">
        <Toolbar1 />
        <div className="h-px bg-[#c8c8c8]" />
        <Toolbar2 />
      </div>
      {/* main */}
      <div className="flex-1 min-h-0 flex">
        <div className="w-[1402px] shrink-0 relative bg-[#ababab] overflow-hidden shadow-[inset_0_0_16px_#666]">
          <SkyView />
          <SignalWindow />
        </div>
        <div className="flex-1 min-w-0 ml-[1px] bg-[#f0f0f0] border-l border-t border-[#a8a8a8] flex flex-col">
          <DockPanel h="h-[254px]" top="h-[15px]"><SkyMini /></DockPanel>
          <DockPanel h="h-[253px]" top="h-[17px]"><InfoPanel /></DockPanel>
          <DockPanel h="h-[229px]" top="h-[15px]"><MapMini /></DockPanel>
        </div>
      </div>
      {/* status bar */}
      <div className="h-[20px] shrink-0 bg-[#f0f0f0] flex items-end overflow-hidden">
        <div className="flex-1 h-[20px] pl-[2px] flex items-center">Ready</div>
        <Cell w="w-[225px]">
          <svg width="16" height="11" viewBox="0 0 16 11" className="mr-[4px]"><path d="M0 5.5h3M13 5.5h3" stroke="#000" strokeWidth="2" /><path d="M7 1H4v9h3M9 1h3v9H9" fill="none" stroke="#000" strokeWidth="1.6" /></svg>
          NTRIP client: Not connected
        </Cell>
        <Cell w="w-[116px] ml-[26px]">u-blox M8/8</Cell>
        <Cell w="w-[105px] ml-[3px]">
          <svg width="16" height="11" viewBox="0 0 16 11" className="mr-[4px]"><path d="M0 4h16M0 7h16" stroke="#000" /><rect x="4" y="1" width="8" height="9" fill="#10c010" stroke="#000" /></svg>
          COM4 115200
        </Cell>
        <Cell w="w-[125px] ml-[3px]">No file open</Cell>
        <Cell w="w-[46px] ml-[3px]">UBX</Cell>
        <Cell w="w-[45px] ml-[3px] text-[11.5px] tracking-[-0.3px]">00:01:06</Cell>
        <Cell w="w-[45px] ml-[3px] text-[11.5px] tracking-[-0.3px]">13:30:18</Cell>
        <Cell w="w-[19px] ml-[3px]">
          <svg width="14" height="14" viewBox="0 0 14 14"><circle cx="7" cy="7" r="5" fill="#20c020" /><circle cx="6" cy="6" r="2" fill="#a0ffa0" /></svg>
        </Cell>
      </div>
    </div>
  );
}
